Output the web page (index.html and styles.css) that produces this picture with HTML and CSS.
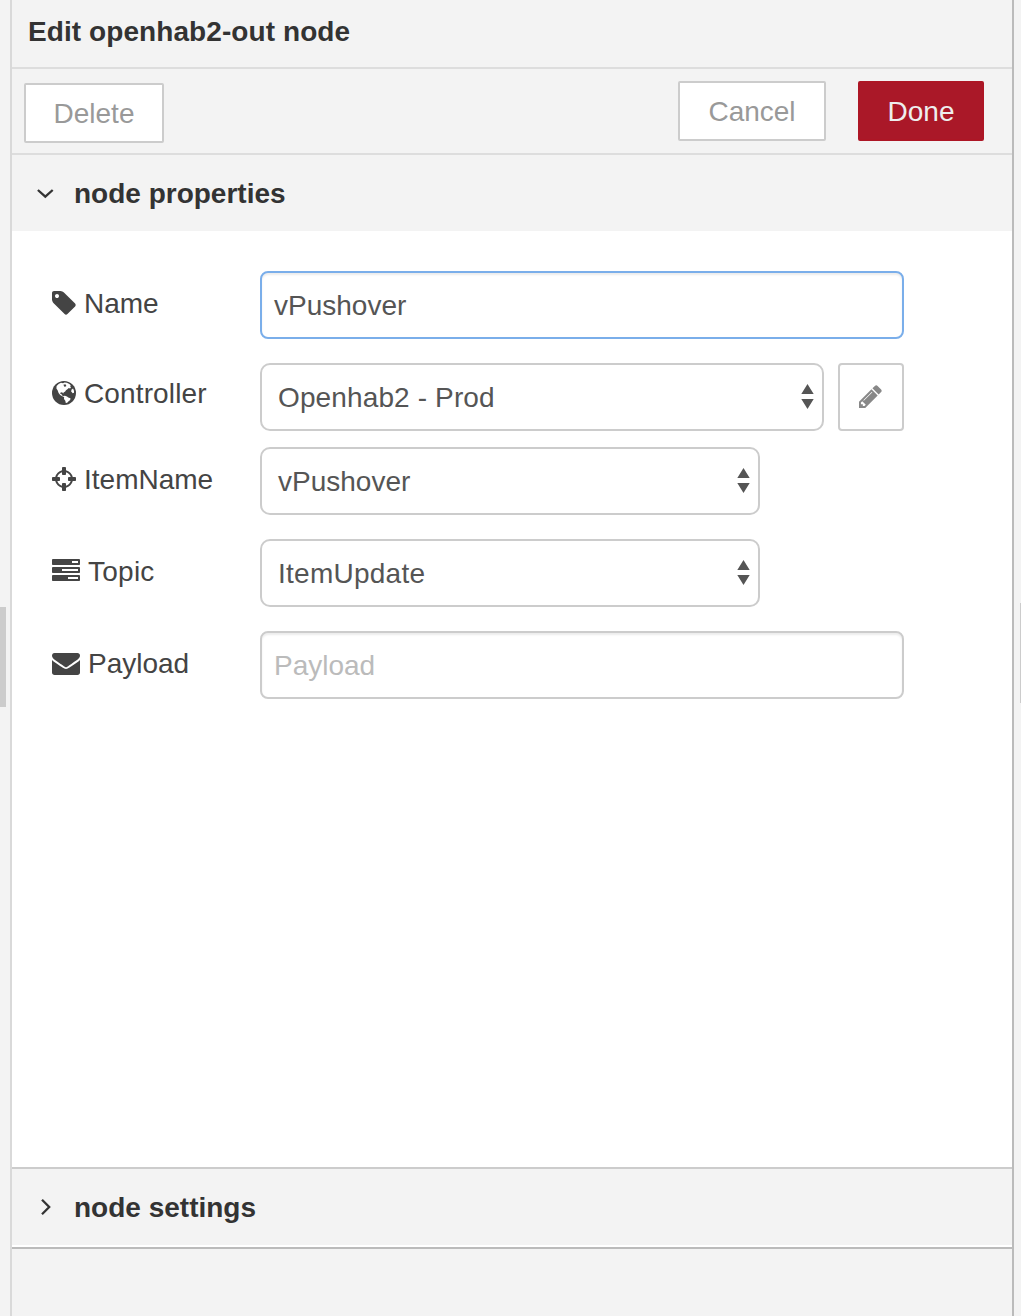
FILE: index.html
```html
<!DOCTYPE html>
<html lang="en">
<head>
<meta charset="utf-8">
<title>Edit openhab2-out node</title>
<link rel="stylesheet" href="styles.css">
</head>
<body>
<div class="workspace">
  <div class="gutter gutter-left"><span class="grip"></span></div>
  <main class="tray">
    <header class="tray-header"><h1>Edit openhab2-out node</h1></header>
    <div class="toolbar">
      <button class="button button-delete" type="button">Delete</button>
      <button class="button button-cancel" type="button">Cancel</button>
      <button class="button button-done" type="button">Done</button>
    </div>
    <section class="section section-properties">
      <h2 class="section-header">
        <svg class="chevron" viewBox="0 0 18 18"><path d="M1.9 6L9.3 12.7L16.7 6"/></svg>
        <span>node properties</span>
      </h2>
      <div class="form">
        <div class="row">
          <div class="label">
            <svg class="icon" viewBox="128 0 1536 1792"><path d="M576 448q0-53-37.5-90.5t-90.5-37.5-90.5 37.5-37.5 90.5 37.5 90.5 90.5 37.5 90.5-37.5 37.5-90.5zm1067 576q0 53-37 90l-491 492q-39 37-91 37-53 0-90-37l-715-716q-38-37-64.5-101t-26.5-117v-416q0-52 38-90t90-38h416q53 0 117 26.5t102 64.5l715 714q37 39 37 91z"/></svg>
            <span>Name</span>
          </div>
          <div class="field input focused"><span>vPushover</span></div>
        </div>
        <div class="row row-controller">
          <div class="label">
            <svg class="icon" viewBox="0 0 24 28"><circle cx="12" cy="14" r="12"/><path class="land" d="M4.6 7L6.6 5L9 3.8L11 4.3L12.5 3.5L14.8 3.8L17.4 4.9L18.7 6.2L18.2 7.4L19 8.6L18 9.4L16.8 9L15.4 10.2L14 11.2L13.2 12.6L11.6 13.4L11.2 14.4L10.1 13.3L8.6 13.6L8.2 14.7L9.7 15.2L10.1 16.6L11.4 17L13 16.7L15 17.4L16.2 18.6L18.5 19.3L18.2 21L16.6 22.3L15.2 23.8L13.8 24L13.3 21.8L12 20L12.1 18.1L10.3 17.2L8.2 16L6.6 14L5.6 11.2L4.4 9.6Z"/><path class="land" d="M19.4 10.7L21 9.4L22 11.7L22 13.8L20.6 14.2L19.3 12.6Z"/><path d="M11.3 5.8l2.2-.5.9 1.6-1.7 1z"/></svg>
            <span class="loose">Controller</span>
          </div>
          <div class="field select select-wide"><span class="loose">Openhab2 - Prod</span><svg class="arrows" viewBox="0 0 13 25"><path d="M.3 10L6.5 0L12.7 10ZM.3 15H12.7L6.5 25Z"/></svg></div>
          <button class="edit" type="button" aria-label="Edit">
            <svg class="icon" viewBox="128 0 1536 1792"><path d="M491 1536l91-91-235-235-91 91v107h128v128h107zm523-928q0-22-22-22-10 0-17 7l-542 542q-7 7-7 17 0 22 22 22 10 0 17-7l542-542q7-7 7-17zm-54-192l416 416-832 832h-416v-416zm683 96q0 53-37 90l-166 166-416-416 166-165q36-38 90-38 53 0 91 38l235 234q37 39 37 91z"/></svg>
          </button>
        </div>
        <div class="row">
          <div class="label">
            <svg class="icon" viewBox="128 0 1536 1792"><path d="M1325 1024h-109q-26 0-45-19t-19-45v-128q0-26 19-45t45-19h109q-32-108-112.5-188.5t-188.5-112.5v109q0 26-19 45t-45 19h-128q-26 0-45-19t-19-45v-109q-108 32-188.5 112.5t-112.5 188.5h109q26 0 45 19t19 45v128q0 26-19 45t-45 19h-109q32 108 112.5 188.5t188.5 112.5v-109q0-26 19-45t45-19h128q26 0 45 19t19 45v109q108-32 188.5-112.5t112.5-188.5zm339-192v128q0 26-19 45t-45 19h-143q-37 161-154.5 278.5t-278.5 154.5v143q0 26-19 45t-45 19h-128q-26 0-45-19t-19-45v-143q-161-37-278.5-154.5t-154.5-278.5h-143q-26 0-45-19t-19-45v-128q0-26 19-45t45-19h143q37-161 154.5-278.5t278.5-154.5v-143q0-26 19-45t45-19h128q26 0 45 19t19 45v143q161 37 278.5 154.5t154.5 278.5h143q26 0 45 19t19 45z"/></svg>
            <span>ItemName</span>
          </div>
          <div class="field select"><span>vPushover</span><svg class="arrows" viewBox="0 0 13 25"><path d="M.3 10L6.5 0L12.7 10ZM.3 15H12.7L6.5 25Z"/></svg></div>
        </div>
        <div class="row">
          <div class="label">
            <svg class="icon icon-wide" viewBox="0 0 1792 1792"><path d="M1024 1408h640v-128h-640v128zm-384-512h1024v-128h-1024v128zm640-512h384v-128h-384v128zm512 832v256q0 26-19 45t-45 19h-1664q-26 0-45-19t-19-45v-256q0-26 19-45t45-19h1664q26 0 45 19t19 45zm0-512v256q0 26-19 45t-45 19h-1664q-26 0-45-19t-19-45v-256q0-26 19-45t45-19h1664q26 0 45 19t19 45zm0-512v256q0 26-19 45t-45 19h-1664q-26 0-45-19t-19-45v-256q0-26 19-45t45-19h1664q26 0 45 19t19 45z"/></svg>
            <span class="looser">Topic</span>
          </div>
          <div class="field select"><span class="looser">ItemUpdate</span><svg class="arrows" viewBox="0 0 13 25"><path d="M.3 10L6.5 0L12.7 10ZM.3 15H12.7L6.5 25Z"/></svg></div>
        </div>
        <div class="row">
          <div class="label">
            <svg class="icon icon-wide" viewBox="0 0 1792 1792"><path d="M1792 710v794q0 66-47 113t-113 47h-1472q-66 0-113-47t-47-113v-794q44 49 101 87 362 246 497 345 57 42 92.5 65.5t94.5 48 110 24.5h2q51 0 110-24.5t94.5-48 92.5-65.5q170-123 498-345 57-39 100-87zm0-294q0 79-49 151t-122 123q-376 261-468 325-10 7-42.5 31t-54 39-52 33.5-57.5 32.5-50 14h-2q-23 0-50-14t-57.5-32.5-52-33.5-54-39-42.5-31q-91-64-262-182.5t-205-142.5q-62-42-117-115.5t-55-136.5q0-78 41.5-130t118.5-52h1472q65 0 112.5 47t47.5 113z"/></svg>
            <span>Payload</span>
          </div>
          <div class="field input placeholder"><span>Payload</span></div>
        </div>
      </div>
    </section>
    <section class="section section-settings">
      <h2 class="section-header">
        <svg class="chevron" viewBox="0 0 18 18"><path d="M6 1.8L13.2 9L6 16.2"/></svg>
        <span>node settings</span>
      </h2>
    </section>
    <footer class="tray-footer"></footer>
  </main>
  <div class="gutter gutter-right"><span class="grip"></span></div>
</div>
</body>
</html>
```

FILE: styles.css
```css
* {
  box-sizing: border-box;
}

body {
  margin: 0;
  background: #f3f3f3;
  color: #444;
  font: 28px/28px "Liberation Sans", Arial, sans-serif;
}

h1,
h2 {
  margin: 0;
  color: #333;
  font-size: 28px;
  line-height: 28px;
  font-weight: bold;
}

h1 {
  letter-spacing: 0.08px;
}

svg {
  display: block;
  flex: none;
}

.workspace {
  display: flex;
  width: 1021px;
  height: 1316px;
  overflow: hidden;
}

.gutter {
  display: flex;
  flex: none;
}

.gutter-left {
  width: 10px;
  padding-top: 607px;
}

.gutter-right {
  width: 7px;
  padding-top: 603px;
  justify-content: flex-end;
}

.grip {
  width: 6px;
  height: 100px;
  background: #ccc;
}

.gutter-right .grip {
  width: 1px;
}

.tray {
  display: flex;
  flex-direction: column;
  width: 1004px;
  border-left: 2px solid #d9d9d9;
  border-right: 2px solid #bbb;
}

.tray-header {
  height: 69px;
  padding: 18px 16px 0;
  border-bottom: 2px solid #ddd;
}

.toolbar {
  display: flex;
  align-items: flex-start;
  height: 86px;
  padding: 12px 28px 0 12px;
  border-bottom: 2px solid #ddd;
}

.button {
  height: 60px;
  padding: 2px 0 0;
  border: 2px solid #ccc;
  border-radius: 2px;
  background: #fff;
  color: #999;
  font: inherit;
}

.button-delete {
  width: 140px;
  margin-top: 2px;
}

.button-cancel {
  width: 148px;
  margin-left: auto;
}

.button-done {
  width: 126px;
  margin-left: 32px;
  border-color: #ad1625;
  background: #aa1828;
  color: #eee;
}

.section-header {
  display: flex;
  align-items: center;
  height: 76px;
  padding-left: 24px;
  background: #f3f3f3;
}

.section-header span {
  margin-left: 20px;
  padding-top: 2px;
}

.chevron {
  width: 18px;
  height: 18px;
  fill: none;
  stroke: #333;
  stroke-width: 2.3;
}

.section-properties {
  height: 1012px;
  background: #fff;
}

.section-settings {
  height: 80px;
  border-top: 2px solid #ccc;
  background: #fff;
}

.tray-footer {
  flex: 1;
  border-top: 2px solid #bbb;
}

.form {
  display: flex;
  flex-direction: column;
  gap: 24px;
  padding: 40px 40px 0;
}

.row {
  display: flex;
  height: 68px;
}

.row-controller {
  margin-bottom: -8px;
}

.label {
  display: flex;
  gap: 8px;
  width: 208px;
  padding-top: 18px;
}

.label span {
  line-height: 30px;
}

.row-controller .label {
  padding-top: 16px;
}

.loose {
  letter-spacing: 0.13px;
}

.looser {
  letter-spacing: 0.25px;
}

.icon {
  width: 24px;
  height: 28px;
  fill: #444;
}

.icon-wide {
  width: 28px;
}

.land {
  fill: #fff;
}

.field {
  display: flex;
  align-items: center;
  height: 68px;
  border: 2px solid #ccc;
  background: #fff;
  color: #555;
}

.field span {
  padding-top: 2px;
}

.input {
  width: 644px;
  padding: 0 12px;
  border-radius: 8px;
  box-shadow: inset 0 2px 2px rgba(0, 0, 0, 0.075);
}

.focused {
  border-color: #7aaeea;
}

.placeholder {
  color: #bbb;
}

.select {
  justify-content: space-between;
  width: 500px;
  padding: 0 8px 0 16px;
  border-radius: 10px;
}

.select-wide {
  width: 564px;
}

.arrows {
  width: 13px;
  height: 25px;
  margin-bottom: 1px;
  fill: #555;
}

.edit {
  display: flex;
  align-items: center;
  justify-content: center;
  width: 66px;
  height: 68px;
  margin-left: 14px;
  padding: 0 1px 2px 0;
  border: 2px solid #ccc;
  border-radius: 4px;
  background: #fff;
}

.edit .icon {
  width: 23px;
  height: 27px;
  fill: #888;
}
```
